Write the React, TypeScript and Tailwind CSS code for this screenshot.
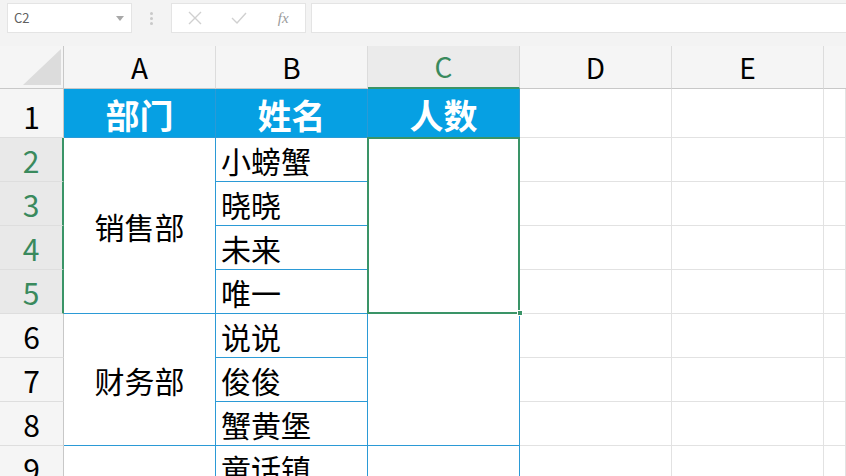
import React from "react";

const FONT = '"Noto Sans CJK SC", "Noto Sans", sans-serif';

const COLS = ["A", "B", "C", "D", "E"];
const COL_START = ["col-start-2", "col-start-3", "col-start-4", "col-start-5", "col-start-6", "col-start-7"];
// sheet row n sits in grid row n + 1 (grid row 1 holds the column letters)
const ROW_START = [
  "row-start-1",
  "row-start-2",
  "row-start-3",
  "row-start-4",
  "row-start-5",
  "row-start-6",
  "row-start-7",
  "row-start-8",
  "row-start-9",
  "row-start-10",
];

// rows 2..5 selected (C2:C5)
const SELECTED_ROWS = [2, 3, 4, 5];

function Toolbar() {
  return (
    <div className="flex h-[46px] items-start bg-[#f3f3f3] pt-[3px]">
      {/* name box */}
      <div className="ml-[7px] flex h-[30px] w-[125px] items-center justify-between border border-[#e4e4e4] bg-white pl-[6px] pr-[7px]">
        <span className="text-[13px] text-[#606060]">C2</span>
        <svg width="8" height="5" viewBox="0 0 8 5">
          <path d="M0 0 L8 0 L4 5 Z" fill="#a8a8a8" />
        </svg>
      </div>
      {/* grip */}
      <div className="flex h-[30px] w-[39px] flex-col items-center justify-center gap-[2px]">
        <span className="h-[3px] w-[3px] rounded-full bg-[#c9c9c9]" />
        <span className="h-[3px] w-[3px] rounded-full bg-[#c9c9c9]" />
        <span className="h-[3px] w-[3px] rounded-full bg-[#c9c9c9]" />
      </div>
      {/* cancel / enter / fx */}
      <div className="flex h-[30px] w-[135px] items-center border border-[#e4e4e4] bg-white">
        <div className="flex w-[44px] justify-center pl-[2px]">
          <svg width="14" height="14" viewBox="0 0 14 14">
            <path d="M1 1 L13 13 M13 1 L1 13" stroke="#d0d0d0" strokeWidth="1.4" fill="none" />
          </svg>
        </div>
        <div className="flex w-[46px] justify-center">
          <svg width="16" height="12" viewBox="0 0 16 12">
            <path d="M1 6 L6 11 L15 1" stroke="#d0d0d0" strokeWidth="1.4" fill="none" />
          </svg>
        </div>
        <div className="flex w-[44px] justify-center">
          <span className="text-[15px] italic text-[#9a9a9a]" style={{ fontFamily: '"Liberation Serif", serif' }}>
            fx
          </span>
        </div>
      </div>
      {/* formula input */}
      <div className="ml-[5px] h-[30px] flex-1 border border-r-0 border-[#e4e4e4] bg-white" />
    </div>
  );
}

type BodyCell = {
  col: number; // 0 = A
  row: number; // 1-based sheet row
  span?: number;
  text?: string;
  align?: "center" | "left";
  table?: boolean;
  header?: boolean;
};

const ROW_SPAN: Record<number, string> = { 1: "", 3: "row-span-3", 4: "row-span-4" };

const cells: BodyCell[] = [
  { col: 0, row: 1, text: "部门", header: true, table: true },
  { col: 1, row: 1, text: "姓名", header: true, table: true },
  { col: 2, row: 1, text: "人数", header: true, table: true },
  { col: 0, row: 2, span: 4, text: "销售部", align: "center", table: true },
  { col: 1, row: 2, text: "小螃蟹", table: true },
  { col: 1, row: 3, text: "晓晓", table: true },
  { col: 1, row: 4, text: "未来", table: true },
  { col: 1, row: 5, text: "唯一", table: true },
  { col: 2, row: 2, span: 4, table: true },
  { col: 0, row: 6, span: 3, text: "财务部", align: "center", table: true },
  { col: 1, row: 6, text: "说说", table: true },
  { col: 1, row: 7, text: "俊俊", table: true },
  { col: 1, row: 8, text: "蟹黄堡", table: true },
  { col: 2, row: 6, span: 3, table: true },
  { col: 0, row: 9, table: true },
  { col: 1, row: 9, text: "童话镇", table: true },
  { col: 2, row: 9, table: true },
];

// plain grid cells D, E, F for rows 1..9
for (let r = 1; r <= 9; r++) {
  for (let c = 3; c <= 5; c++) cells.push({ col: c, row: r });
}

function Cell({ cell }: { cell: BodyCell }) {
  const pos = `${COL_START[cell.col]} ${ROW_START[cell.row]} ${ROW_SPAN[cell.span ?? 1]}`;
  if (cell.header) {
    return (
      <div
        className={`${pos} flex items-center justify-center border-r border-b border-[#2b9ad6] bg-[#06a0e3] pt-[2px] text-[34px] font-bold text-white`}
      >
        {cell.text}
      </div>
    );
  }
  const border = cell.table ? "border-[#2b9ad6]" : "border-[#e2e2e2]";
  const place =
    cell.align === "center"
      ? "items-center justify-center"
      : "items-end justify-start pl-[5px] pb-[1px]";
  return (
    <div className={`${pos} flex border-r border-b ${border} bg-white ${place} text-[30px] leading-[40px] text-black`}>
      {cell.text}
    </div>
  );
}

export default function App() {
  const rowNums = [1, 2, 3, 4, 5, 6, 7, 8, 9];
  return (
    <div className="h-[476px] w-[846px] overflow-hidden bg-white" style={{ fontFamily: FONT }}>
      <Toolbar />
      <div className="grid grid-cols-[64px_repeat(5,152px)_1fr] grid-rows-[43px_49px_repeat(8,44px)] bg-[#f5f5f5]">
        {/* select-all corner */}
        <div className="col-start-1 row-start-1 flex items-end justify-end border-r border-b border-[#c8c8c8] pb-[3px] pr-[2px]">
          <svg width="38" height="36" viewBox="0 0 38 36">
            <path d="M38 0 L38 36 L0 36 Z" fill="#dcdcdc" />
          </svg>
        </div>
        {/* column headers */}
        {COLS.map((c, i) => (
          <div
            key={c}
            className={`${COL_START[i]} row-start-1 flex items-end justify-center border-r pb-[1px] text-[28px] leading-[40px] ${
              c === "C"
                ? "border-b-2 border-r-[#d8d8d8] border-b-[#3a9467] bg-[#ebebeb] text-[#3a8a5d]"
                : "border-b border-r-[#dcdcdc] border-b-[#c8c8c8] text-black"
            }`}
          >
            {c}
          </div>
        ))}
        <div className="col-start-7 row-start-1 border-b border-[#c8c8c8]" />
        {/* row headers */}
        {rowNums.map((r) => {
          const sel = SELECTED_ROWS.includes(r);
          return (
            <div
              key={r}
              className={`col-start-1 ${ROW_START[r]} flex items-end justify-center border-b border-b-[#dedede] pb-[1px] text-[30px] leading-[40px] ${
                sel
                  ? "border-r-2 border-r-[#3a9467] bg-[#e9e9e9] text-[#3a8a5d]"
                  : "border-r border-r-[#c8c8c8] text-black"
              }`}
            >
              {r}
            </div>
          );
        })}
        {cells.map((cell, i) => (
          <Cell key={i} cell={cell} />
        ))}
        {/* selection outline C2:C5 */}
        <div className="pointer-events-none col-start-4 row-start-3 row-span-4 -mt-px -ml-px border-2 border-[#3a9467]" />
        {/* fill handle, at the outline's bottom-right corner */}
        <div className="pointer-events-none relative col-start-4 row-start-7">
          <span className="absolute -top-[4px] -right-[3px] h-[6px] w-[6px] border border-white bg-[#3a9467]" />
        </div>
      </div>
    </div>
  );
}
